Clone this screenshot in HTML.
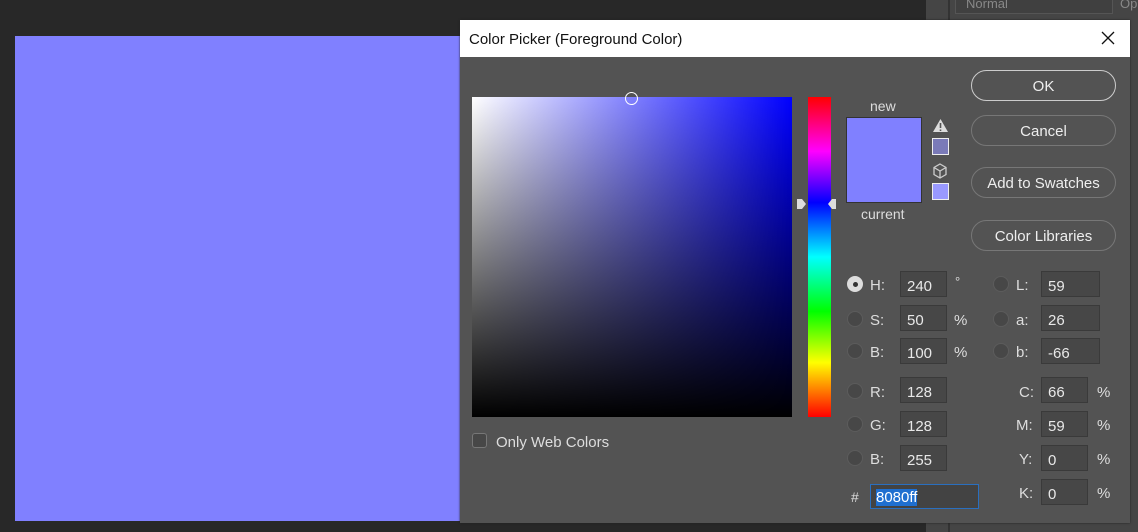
<!DOCTYPE html>
<html><head><meta charset="utf-8"><style>
*{margin:0;padding:0;box-sizing:border-box}
body{width:1138px;height:532px;background:#282828;position:relative;overflow:hidden;font-family:"Liberation Sans",sans-serif;color:#ddd}
.a{position:absolute}
.inp{position:absolute;background:#474747;border:1px solid #3a3a3a;height:26px;font-size:15px;color:#e8e8e8;padding:6px 0 0 6px}
.lbl{position:absolute;font-size:15px;color:#ddd;margin-top:1px}
.rad{position:absolute;width:16px;height:16px;border-radius:50%;background:#474747;border:1px solid #5c5c5c}
.btn{position:absolute;left:971px;width:145px;height:31px;border:1px solid #888;border-radius:16px;font-size:15px;color:#eee;text-align:center;line-height:31px}
</style></head><body>
<div class="a" style="left:926px;top:0;width:212px;height:532px;background:#454545"></div>
<div class="a" style="left:948px;top:0;width:2px;height:532px;background:#333"></div>
<div class="a" style="left:955px;top:0;width:158px;height:14px;border:1px solid #555;border-top:none;background:#404040;font-size:13px;color:#888;padding-left:10px;line-height:8px">Normal</div>
<div class="a" style="left:1120px;top:0;font-size:13px;color:#888;line-height:8px">Op</div>
<div class="a" style="left:15px;top:36px;width:445px;height:485px;background:#8080ff"></div>
<div class="a" style="left:460px;top:20px;width:670px;height:503px;background:#535353;box-shadow:0 0 2px #222"></div>
<div class="a" style="left:460px;top:20px;width:670px;height:37px;background:#fff;color:#111;font-size:15px;padding:11px 0 0 9px">Color Picker (Foreground Color)</div>
<svg class="a" style="left:1101px;top:31px" width="14" height="14"><path d="M1 1L13 13M13 1L1 13" stroke="#111" stroke-width="1.3"/></svg>
<div class="a" style="left:472px;top:97px;width:320px;height:320px;background:linear-gradient(to bottom,rgba(0,0,0,0),#000),linear-gradient(to right,#fff,#00f)"></div>
<div class="a" style="left:625px;top:92px;width:13px;height:13px;border-radius:50%;border:1px solid #fff"></div>
<div class="a" style="left:808px;top:97px;width:23px;height:320px;background:linear-gradient(to bottom,#f00,#f0f 17%,#00f 33%,#0ff 50%,#0f0 67%,#ff0 83%,#f00)"></div>
<svg class="a" style="left:796px;top:198px" width="40" height="12"><path d="M1 1h5l4 5-4 5H1z" fill="#ddd"/><path d="M40 1h-4l-4 5 4 5h4z" fill="#ddd"/></svg>
<div class="a" style="left:472px;top:433px;width:15px;height:15px;border:1px solid #777;border-radius:3px;background:#474747"></div>
<div class="lbl" style="left:496px;top:433px">Only Web Colors</div>
<div class="lbl" style="left:870px;top:97px;font-size:14px">new</div>
<div class="a" style="left:846px;top:117px;width:76px;height:86px;background:#8080ff;border:1px solid #333"></div>
<div class="lbl" style="left:861px;top:205px;font-size:14px">current</div>
<svg class="a" style="left:932px;top:118px" width="17" height="15"><path d="M8.5 1L16 14H1z" fill="#ddd"/><path d="M8.5 5v5M8.5 11.5v1.5" stroke="#535353" stroke-width="1.6"/></svg>
<div class="a" style="left:932px;top:138px;width:17px;height:17px;border:1px solid #eee;background:#7a7ab8"></div>
<svg class="a" style="left:932px;top:163px" width="16" height="16"><path d="M8 1l6 3.5v7L8 15 2 11.5v-7z M2 4.5L8 8l6-3.5M8 8v7" fill="none" stroke="#ccc" stroke-width="1.3"/></svg>
<div class="a" style="left:932px;top:183px;width:17px;height:17px;border:1px solid #eee;background:#9999ff"></div>
<div class="btn" style="top:70px;border:1.5px solid #ccc">OK</div>
<div class="btn" style="top:115px;border-color:#777">Cancel</div>
<div class="btn" style="top:167px;border-color:#777">Add to Swatches</div>
<div class="btn" style="top:220px;border-color:#777">Color Libraries</div>

<div class="rad" style="left:847px;top:276px;background:#ddd;border-color:#ddd"></div><div class="a" style="left:853px;top:282px;width:5px;height:5px;border-radius:50%;background:#333"></div>
<div class="rad" style="left:847px;top:311px"></div>
<div class="rad" style="left:847px;top:343px"></div>
<div class="rad" style="left:847px;top:383px"></div>
<div class="rad" style="left:847px;top:416px"></div>
<div class="rad" style="left:847px;top:450px"></div>
<div class="lbl" style="left:870px;top:276px">H:</div>
<div class="lbl" style="left:870px;top:311px">S:</div>
<div class="lbl" style="left:870px;top:343px">B:</div>
<div class="lbl" style="left:870px;top:383px">R:</div>
<div class="lbl" style="left:870px;top:416px">G:</div>
<div class="lbl" style="left:870px;top:450px">B:</div>
<div class="inp" style="left:900px;top:271px;width:47px">240</div>
<div class="inp" style="left:900px;top:305px;width:47px">50</div>
<div class="inp" style="left:900px;top:338px;width:47px">100</div>
<div class="inp" style="left:900px;top:377px;width:47px">128</div>
<div class="inp" style="left:900px;top:411px;width:47px">128</div>
<div class="inp" style="left:900px;top:445px;width:47px">255</div>
<div class="lbl" style="left:955px;top:273px;font-size:13px">°</div>
<div class="lbl" style="left:954px;top:311px">%</div>
<div class="lbl" style="left:954px;top:343px">%</div>
<div class="rad" style="left:993px;top:276px"></div>
<div class="rad" style="left:993px;top:311px"></div>
<div class="rad" style="left:993px;top:343px"></div>
<div class="lbl" style="left:1016px;top:276px">L:</div>
<div class="lbl" style="left:1016px;top:311px">a:</div>
<div class="lbl" style="left:1016px;top:343px">b:</div>
<div class="inp" style="left:1041px;top:271px;width:59px">59</div>
<div class="inp" style="left:1041px;top:305px;width:59px">26</div>
<div class="inp" style="left:1041px;top:338px;width:59px">-66</div>
<div class="lbl" style="left:1019px;top:383px">C:</div>
<div class="lbl" style="left:1016px;top:416px">M:</div>
<div class="lbl" style="left:1019px;top:450px">Y:</div>
<div class="lbl" style="left:1019px;top:484px">K:</div>
<div class="inp" style="left:1041px;top:377px;width:47px">66</div>
<div class="inp" style="left:1041px;top:411px;width:47px">59</div>
<div class="inp" style="left:1041px;top:445px;width:47px">0</div>
<div class="inp" style="left:1041px;top:479px;width:47px">0</div>
<div class="lbl" style="left:1097px;top:383px">%</div>
<div class="lbl" style="left:1097px;top:416px">%</div>
<div class="lbl" style="left:1097px;top:450px">%</div>
<div class="lbl" style="left:1097px;top:484px">%</div>
<div class="lbl" style="left:851px;top:488px;font-size:14px">#</div>
<div class="inp" style="left:870px;top:484px;width:109px;height:25px;border-color:#2a6fbf;background:#434343;padding:4px 0 0 5px"><span style="background:#1f6fd0;color:#fff">8080ff</span></div>
</body></html>
